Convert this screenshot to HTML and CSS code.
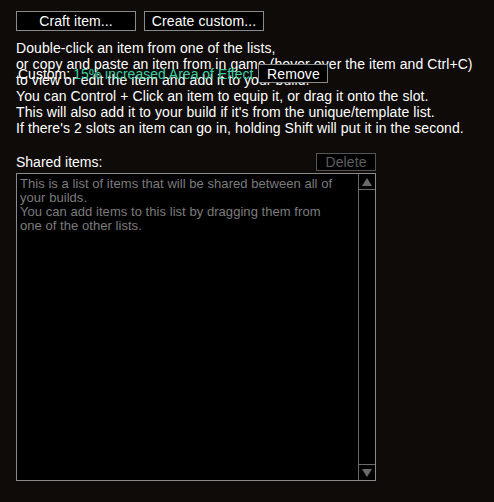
FILE: index.html
```html
<!DOCTYPE html>
<html>
<head>
<meta charset="utf-8">
<link rel="stylesheet" href="styles.css">
</head>
<body>
<div class="page">
  <div class="toolbar">
    <button class="btn">Craft item...</button>
    <button class="btn">Create custom...</button>
  </div>
  <div class="help">
    <div>Double-click an item from one of the lists,</div>
    <div>or copy and paste an item from in game (hover over the item and Ctrl+C)</div>
    <div>to view or edit the item and add it to your build.</div>
    <div>You can Control + Click an item to equip it, or drag it onto the slot.</div>
    <div>This will also add it to your build if it's from the unique/template list.</div>
    <div>If there's 2 slots an item can go in, holding Shift will put it in the second.</div>
  </div>
  <div class="custom-row">
    <span class="custom-label">Custom:</span>
    <span class="custom-mod">15% increased Area of Effect</span>
    <button class="btn remove">Remove</button>
  </div>
  <div class="shared-head">
    <span class="shared-label">Shared items:</span>
    <button class="btn delete">Delete</button>
  </div>
  <div class="list">
    <div class="list-text">
      <div>This is a list of items that will be shared between all of</div>
      <div>your builds.</div>
      <div>You can add items to this list by dragging them from</div>
      <div>one of the other lists.</div>
    </div>
    <div class="scrollbar">
      <div class="sb-btn sb-up"><span class="tri-up"></span></div>
      <div class="sb-track"></div>
      <div class="sb-btn sb-down"><span class="tri-down"></span></div>
    </div>
  </div>
</div>
</body>
</html>
```
FILE: styles.css
```css
html, body {
  margin: 0;
  padding: 0;
  background: #0e0b09;
  height: 100%;
}
body {
  font-family: "Liberation Sans", Arial, sans-serif;
  font-size: 14px;
  color: #ffffff;
}
.page {
  position: relative;
  padding: 11px 0 0 16px;
}
.toolbar {
  display: flex;
  gap: 8px;
}
.btn {
  font-family: "Liberation Sans", Arial, sans-serif;
  font-size: 14px;
  color: #ffffff;
  background: #000000;
  border: 1px solid #8a8a8a;
  height: 20px;
  width: 120px;
  padding: 0;
  margin: 0;
  line-height: 18px;
  text-align: center;
  letter-spacing: 0.1px;
}
.help {
  margin-top: 9px;
  line-height: 16px;
  letter-spacing: 0.08px;
}
.custom-row {
  position: absolute;
  left: 16px;
  top: 64px;
  display: flex;
  align-items: center;
  height: 19px;
}
.custom-label {
  margin-left: 2px;
  margin-right: 3px;
}
.custom-mod {
  color: #3fcda2;
}
.btn.remove {
  width: 70px;
  height: 19px;
  margin-left: 5px;
}
.shared-head {
  display: flex;
  justify-content: space-between;
  align-items: flex-start;
  width: 360px;
  margin-top: 17px;
  height: 20px;
}
.shared-label {
  line-height: 16px;
  margin-top: 1px;
}
.btn.delete {
  width: 60px;
  height: 18px;
  line-height: 16px;
  color: #5e5e5e;
  border-color: #555555;
}
.list {
  display: flex;
  width: 360px;
  height: 308px;
  box-sizing: border-box;
  border: 1px solid #8a8a8a;
  background: #000000;
}
.list-text {
  flex: 1;
  padding: 3px 0 0 3px;
  font-size: 13px;
  line-height: 14px;
  letter-spacing: 0.05px;
  color: #7c7c7c;
  white-space: nowrap;
}
.scrollbar {
  width: 16px;
  display: flex;
  flex-direction: column;
  border-left: 1px solid #6a6a6a;
}
.sb-btn {
  height: 15px;
  display: flex;
  align-items: center;
  justify-content: center;
}
.sb-up {
  border-bottom: 1px solid #6a6a6a;
}
.sb-down {
  border-top: 1px solid #6a6a6a;
}
.sb-track {
  flex: 1;
}
.tri-up {
  width: 0;
  height: 0;
  border-left: 5px solid transparent;
  border-right: 5px solid transparent;
  border-bottom: 8px solid #6a6a6a;
}
.tri-down {
  width: 0;
  height: 0;
  border-left: 5px solid transparent;
  border-right: 5px solid transparent;
  border-top: 8px solid #6a6a6a;
}
```
